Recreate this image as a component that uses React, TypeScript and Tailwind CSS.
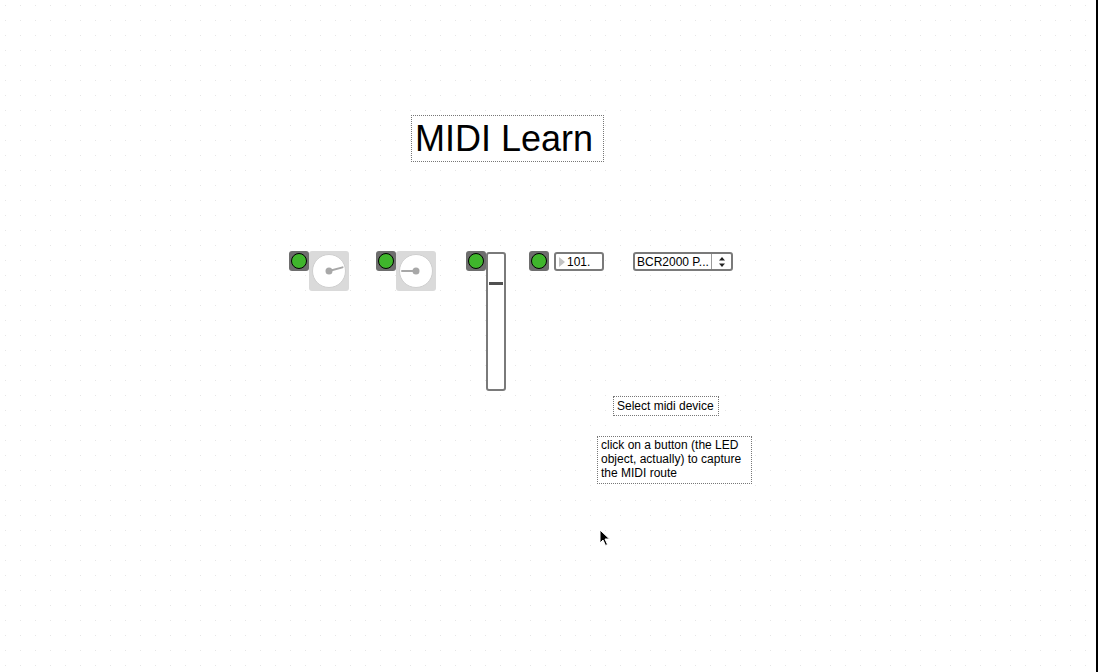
const Led = () => (
  <div className="w-[20px] h-[20px] shrink-0 rounded-[3px] bg-[#6e6e6e] flex items-center justify-center">
    <div className="w-[16px] h-[16px] rounded-full bg-[#3fb52c] border-[1.5px] border-black" />
  </div>
);

const Dial = ({ angle }: { angle: number }) => {
  const rad = (angle * Math.PI) / 180;
  const ex = 20 + 14 * Math.cos(rad);
  const ey = 20 - 14 * Math.sin(rad);
  return (
    <div className="w-[40px] h-[40px] rounded-[3px] bg-[#dadada]">
      <svg width="40" height="40" viewBox="0 0 40 40">
        <circle cx="20" cy="20" r="16.5" fill="#fff" stroke="#cfcfcf" strokeWidth="1" />
        <line x1="20" y1="20" x2={ex} y2={ey} stroke="#a8a8a8" strokeWidth="2" strokeLinecap="round" />
        <circle cx="20" cy="20" r="3.5" fill="#a8a8a8" />
      </svg>
    </div>
  );
};

// objects on the patcher canvas: position is the content
const Obj = ({ x, y, children }: { x: number; y: number; children: React.ReactNode }) => (
  <div className="absolute flex items-start" style={{ left: x, top: y }}>
    {children}
  </div>
);

const App = () => {
  return (
    <div className="relative w-[1098px] h-[672px] overflow-hidden bg-white font-['Liberation_Sans',Arial,sans-serif] text-black bg-[radial-gradient(circle,#e6e6e6_0.8px,transparent_1px)] bg-[length:15px_15px] bg-[position:-2px_-2px]">
      <Obj x={411} y={115}>
        <div className="w-[193px] h-[47px] border border-dotted border-[#777] pl-[3px] pt-[1px] text-[36px] leading-[44px] bg-white">
          MIDI Learn
        </div>
      </Obj>

      <Obj x={289} y={251}>
        <Led />
        <Dial angle={15} />
      </Obj>

      <Obj x={376} y={251}>
        <Led />
        <Dial angle={180} />
      </Obj>

      <Obj x={466} y={251}>
        <Led />
        <div className="relative mt-[1px] w-[20px] h-[139px] rounded-[3px] border-2 border-[#7a7a7a] bg-white">
          <div className="absolute left-[1px] right-[1px] top-[28px] h-[3px] bg-[#505050]" />
        </div>
      </Obj>

      <Obj x={529} y={251}>
        <Led />
        <div className="ml-[5px] mt-[1px] w-[50px] h-[19px] rounded-[3px] border-2 border-[#7a7a7a] bg-white flex items-center">
          <svg width="9" height="12" viewBox="0 0 9 12" className="ml-[2px]">
            <polygon points="1,1 7,6 1,11" fill="#c2c2c2" />
          </svg>
          <span className="text-[12px] leading-none">101.</span>
        </div>
        <div className="ml-[29px] mt-[1px] w-[100px] h-[19px] rounded-[3px] border-2 border-[#7a7a7a] bg-white flex items-center">
          <span className="pl-[2px] text-[12px] leading-none flex-1">BCR2000 P...</span>
          <div className="w-[20px] h-full border-l border-[#9a9a9a] flex items-center justify-center">
            <svg width="8" height="12" viewBox="0 0 8 12">
              <polygon points="4,1 7,4.5 1,4.5" fill="#222" />
              <polygon points="4,11 7,7.5 1,7.5" fill="#222" />
            </svg>
          </div>
        </div>
      </Obj>

      <Obj x={597} y={396}>
        <div className="flex flex-col items-start gap-[20px]">
          <div className="ml-[16px] w-[106px] h-[20px] border border-dotted border-[#777] bg-white pl-[3px] text-[12px] leading-[18px]">
            Select midi device
          </div>
          <div className="w-[155px] h-[48px] border border-dotted border-[#777] bg-white pl-[3px] pt-[1px] text-[12px] leading-[14px]">
            click on a button (the LED object, actually) to capture the MIDI route
          </div>
        </div>
      </Obj>

      {/* mouse cursor */}
      <svg className="absolute left-[599px] top-[529px]" width="12" height="18" viewBox="0 0 12 18">
        <path d="M1 1 L1 14 L4 11 L6.5 16.5 L8.5 15.5 L6 10 L10.5 10 Z" fill="#000" stroke="#fff" strokeWidth="1" />
      </svg>

      <div className="absolute right-0 top-0 w-[2px] h-full bg-black" />
    </div>
  );
};

export default App;
